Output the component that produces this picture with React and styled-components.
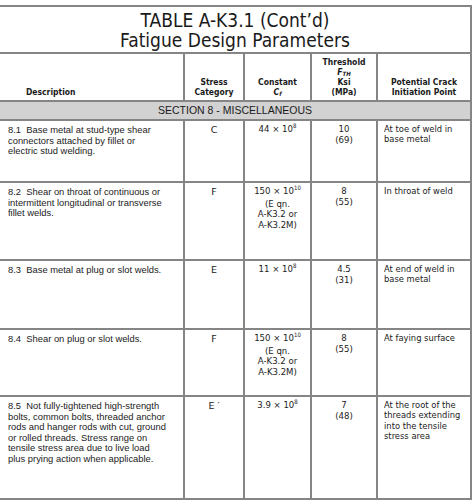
import React from 'react';
import styled, {createGlobalStyle} from 'styled-components';

const GlobalStyle = createGlobalStyle`
    *, *::before, *::after {
        box-sizing: border-box;
    }
    html, body {
        margin: 0;
        padding: 0;
        background: #ffffff;
    }
`

const rows = [
    {
        id: '8.1',
        height: 62,
        desc: ['Base metal at stud-type shear', 'connectors attached by fillet or', 'electric stud welding.'],
        cat: 'C',
        base: '44', exp: '8', eqn: false,
        ksi: '10', mpa: '69',
        crack: ['At toe of weld in', 'base metal']
    },
    {
        id: '8.2',
        height: 78,
        desc: ['Shear on throat of continuous or', 'intermittent longitudinal or transverse', 'fillet welds.'],
        cat: 'F',
        base: '150', exp: '10', eqn: true,
        ksi: '8', mpa: '55',
        crack: ['In throat of weld']
    },
    {
        id: '8.3',
        height: 69,
        desc: ['Base metal at plug or slot welds.'],
        cat: 'E',
        base: '11', exp: '8', eqn: false,
        ksi: '4.5', mpa: '31',
        crack: ['At end of weld in', 'base metal']
    },
    {
        id: '8.4',
        height: 67,
        desc: ['Shear on plug or slot welds.'],
        cat: 'F',
        base: '150', exp: '10', eqn: true,
        ksi: '8', mpa: '55',
        crack: ['At faying surface']
    },
    {
        id: '8.5',
        height: 101,
        desc: ['Not fully-tightened high-strength', 'bolts, common bolts, threaded anchor', 'rods and hanger rods with cut, ground', 'or rolled threads. Stress range on', 'tensile stress area due to live load', 'plus prying action when applicable.'],
        cat: 'E \u2032',
        base: '3.9', exp: '8', eqn: false,
        ksi: '7', mpa: '48',
        crack: ['At the root of the', 'threads extending', 'into the tensile', 'stress area']
    }
]

const lines = (arr) => arr.map((l, i) => <React.Fragment key={i}>{i > 0 && <br />}{l}</React.Fragment>)

const App = () => {
    return (
        <>
        <GlobalStyle />
        <Page>
            <Table>
                <Title>
                    TABLE A-K3.1 (Cont&rsquo;d)<br />
                    Fatigue Design Parameters
                </Title>
                <Row height={48}>
                    <HeadCell align="left"><HeadText>Description</HeadText></HeadCell>
                    <HeadCell><HeadText>Stress<br />Category</HeadText></HeadCell>
                    <HeadCell><HeadText>Constant<br /><Sym>C<sub>f</sub></Sym></HeadText></HeadCell>
                    <HeadCell><HeadText>Threshold<br /><Sym>F<sub>TH</sub></Sym><br />Ksi<br />(MPa)</HeadText></HeadCell>
                    <HeadCell><HeadText>Potential Crack<br />Initiation Point</HeadText></HeadCell>
                </Row>
                <Section>SECTION 8 - MISCELLANEOUS</Section>
                {rows.map((r) => (
                    <Row key={r.id} height={r.height}>
                        <DescCell>
                            {r.id}&nbsp; {lines(r.desc)}
                        </DescCell>
                        <CatCell>{r.cat}</CatCell>
                        <ConstCell>
                            {r.base} &times; 10<Exp>{r.exp}</Exp>
                            {r.eqn && <Eqn>(E qn.<br />A-K3.2 or<br />A-K3.2M)</Eqn>}
                        </ConstCell>
                        <ConstCell>{r.ksi}<br />({r.mpa})</ConstCell>
                        <CrackCell>{lines(r.crack)}</CrackCell>
                    </Row>
                ))}
            </Table>
        </Page>
        </>
    )
}

export default App

const line = '#858585'

const Page = styled.div`
    padding-top: 5px;
    width: 474px;
`

const Table = styled.div`
    width: 472px;
    border-top: 2px solid ${line};
    border-right: 2px solid ${line};
    border-bottom: 2px solid ${line};
    color: #222;
`

const Title = styled.div`
    height: 47px;
    font-family: "DejaVu Sans Condensed", "DejaVu Sans", sans-serif;
    font-size: 19px;
    line-height: 20px;
    text-align: center;
    padding-top: 3px;
    color: #1a1a1a;
    border-bottom: 2px solid ${line};
`

const Row = styled.div`
    display: grid;
    grid-template-columns: 183px 60px 67px 66px 94px;
    height: ${({height}) => height}px;
    border-bottom: 2px solid ${line};
    &:last-child {
        border-bottom: none;
    }
`

const Cell = styled.div`
    border-left: 2px solid ${line};
    &:first-child {
        border-left: none;
    }
`

const HeadCell = styled(Cell)`
    display: flex;
    flex-direction: column;
    justify-content: flex-end;
    align-items: ${({align}) => align === 'left' ? 'flex-start' : 'center'};
    padding: 0 0 3px ${({align}) => align === 'left' ? '26px' : '0'};
`

const HeadText = styled.div`
    font-family: "DejaVu Sans Condensed", "DejaVu Sans", sans-serif;
    font-weight: bold;
    font-size: 8.5px;
    line-height: 10px;
    text-align: center;
    color: #1a1a1a;
`

const Sym = styled.span`
    font-style: italic;
    sub {
        font-size: 6px;
        line-height: 0;
        vertical-align: -1px;
    }
`

const Section = styled.div`
    height: 19px;
    background: #d2d2d2;
    border-bottom: 2px solid ${line};
    font-family: "Liberation Sans", Arial, sans-serif;
    font-size: 10.5px;
    line-height: 17px;
    text-align: center;
    color: #1a1a1a;
`

const DescCell = styled(Cell)`
    padding: 4px 4px 0 8px;
    font-family: "Liberation Sans", Arial, sans-serif;
    font-size: 9.4px;
    line-height: 10.5px;
    white-space: nowrap;
`

const CatCell = styled(Cell)`
    padding-top: 3px;
    text-align: center;
    font-family: "DejaVu Sans", sans-serif;
    font-size: 9.5px;
    line-height: 11px;
`

const ConstCell = styled(Cell)`
    padding-top: 3px;
    text-align: center;
    font-family: "DejaVu Sans Condensed", "DejaVu Sans", sans-serif;
    font-size: 9.5px;
    line-height: 10.5px;
`

const Exp = styled.sup`
    font-size: 6px;
    vertical-align: 4px;
    line-height: 0;
`

const Eqn = styled.div`
    margin-top: 2px;
`

const CrackCell = styled(Cell)`
    padding: 3px 0 0 6px;
    font-family: "DejaVu Sans Condensed", "DejaVu Sans", sans-serif;
    font-size: 9.3px;
    line-height: 10.3px;
    white-space: nowrap;
`
